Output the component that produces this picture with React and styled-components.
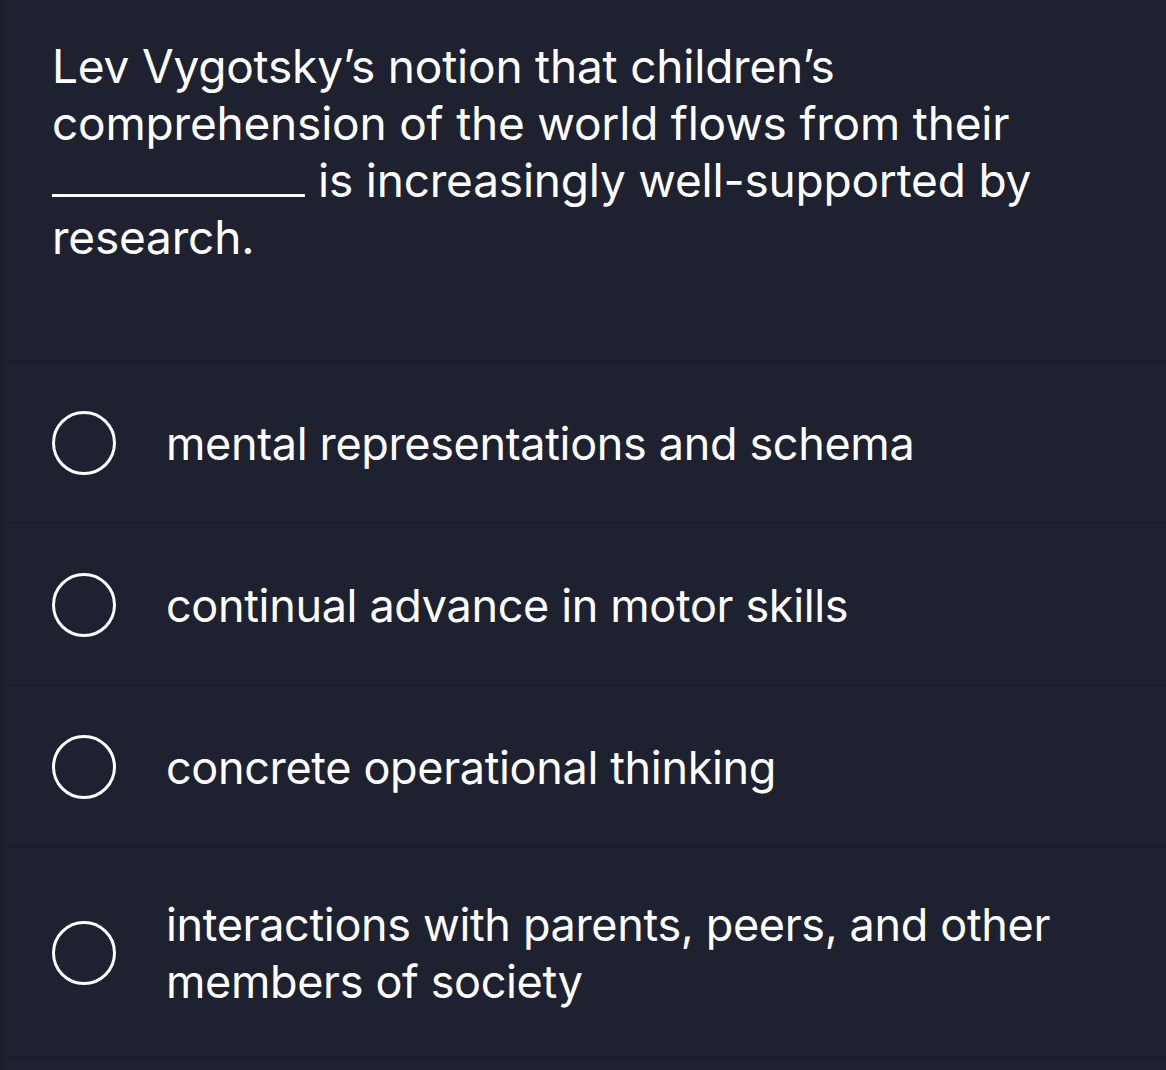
import React from "react";
import styled, { createGlobalStyle } from "styled-components";

const Global = createGlobalStyle`
  html, body { margin: 0; padding: 0; background: #1e2230; }
  body { font-family: Inter, "Noto Sans", sans-serif; }
`;

const Page = styled.div`
  width: 1166px;
  height: 1070px;
  background: #1e2230;
  border-left: 3px solid #1b1f2a;
  box-sizing: border-box;
  color: #ffffff;
  display: flex;
  flex-direction: column;
  overflow: hidden;
`;

const Question = styled.div`
  height: 362px;
  box-sizing: border-box;
  padding: 38px 40px 0 49px;
  font-size: 46px;
  line-height: 57px;
  letter-spacing: -0.2px;
  border-bottom: 2px solid #1a1e29;
`;

const Blank = styled.span`
  display: inline-block;
  width: 253px;
  height: 40px;
  border-bottom: 3px solid #ffffff;
  margin-right: 13px;
  vertical-align: baseline;
`;

const Option = styled.div`
  height: ${(p) => p.$h}px;
  box-sizing: border-box;
  display: flex;
  align-items: center;
  padding-left: 49px;
  padding-top: 2px;
  border-bottom: 2px solid #1a1e29;
`;

const Radio = styled.span`
  flex: none;
  width: 64px;
  height: 64px;
  border-radius: 50%;
  border: 3px solid #ffffff;
  box-sizing: border-box;
  margin-right: 50px;
`;

const Label = styled.div`
  font-size: 45px;
  line-height: 57px;
  letter-spacing: -0.35px;
  max-width: 900px;
`;

const options = [
  { text: "mental representations and schema", h: 162 },
  { text: "continual advance in motor skills", h: 162 },
  { text: "concrete operational thinking", h: 162 },
  { text: "interactions with parents, peers, and other members of society", h: 210 },
];

export default function App() {
  return (
    <>
      <Global />
      <Page>
        <Question>
          Lev Vygotsky’s notion that children’s comprehension of the world flows from their{" "}
          <br />
          <Blank />is increasingly well-supported by research.
        </Question>
        {options.map((o) => (
          <Option key={o.text} $h={o.h}>
            <Radio />
            <Label>{o.text}</Label>
          </Option>
        ))}
      </Page>
    </>
  );
}
